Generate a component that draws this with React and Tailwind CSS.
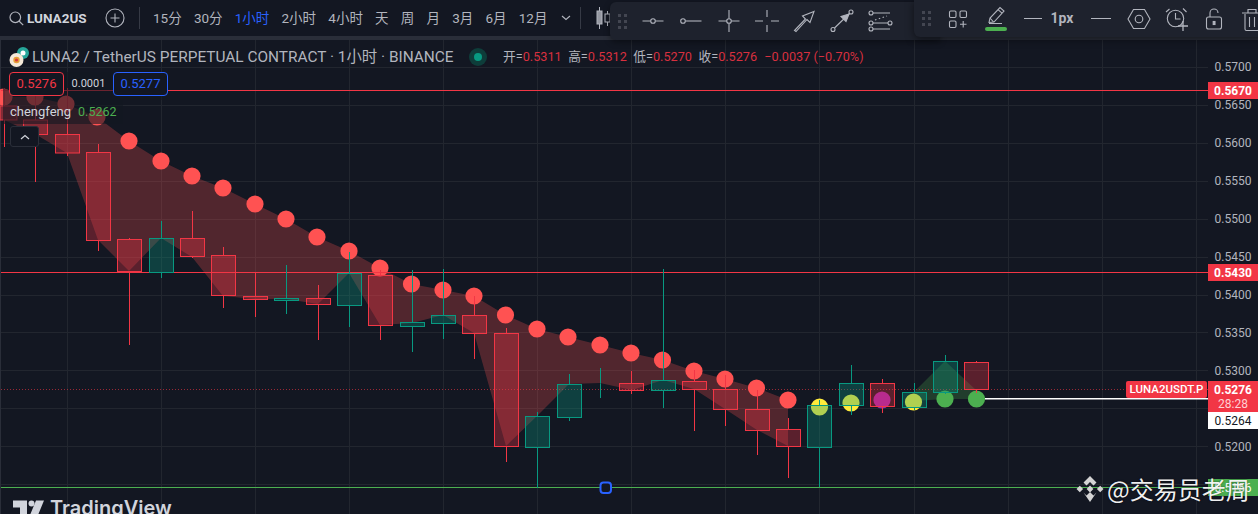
const G = "#089981";
const R = "#f23645";
const candles = [
  [4.5, 0, 17, 106, 120, 88, 147, R],
  [35.5, 23.5, 47.5, 120, 134.5, 92, 182, R],
  [67.5, 55.5, 79.5, 134.5, 153, 88, 156, R],
  [98.5, 86.5, 110.5, 152.5, 240.5, 144, 251, R],
  [129.5, 117.5, 141.5, 239.5, 271.5, 238, 345, R],
  [161.5, 149.5, 173.5, 238.5, 272.5, 221, 278, G],
  [192.5, 180.5, 204.5, 238.5, 256.5, 211, 258, R],
  [223.5, 211.5, 235.5, 255.5, 295.5, 247, 308, R],
  [255.5, 243.5, 267.5, 296.5, 299.5, 273, 317, R],
  [286.5, 274.5, 298.5, 298.5, 300.5, 265, 314, G],
  [318.5, 306.5, 330.5, 298.5, 304.5, 285, 340, R],
  [349.5, 337.5, 361.5, 273.5, 305.5, 252, 327, G],
  [380.5, 368.5, 392.5, 275.5, 325.5, 270, 340, R],
  [412.5, 400.5, 424.5, 322.5, 326.5, 270, 352, G],
  [443.5, 431.5, 455.5, 315.5, 323.5, 269, 339, G],
  [474.5, 462.5, 486.5, 315.5, 333.5, 296, 359, R],
  [506.5, 494.5, 518.5, 333.5, 446.5, 328, 462, R],
  [537.5, 525.5, 549.5, 416.5, 447.5, 412, 488, G],
  [569.5, 557.5, 581.5, 384.5, 417.5, 374, 421, G],
  [600.5, 588.5, 612.5, 383.5, 383.5, 368, 398, G],
  [631.5, 619.5, 643.5, 383.5, 390.5, 371, 394, R],
  [663.5, 651.5, 675.5, 380.5, 390.5, 269, 408, G],
  [694.5, 682.5, 706.5, 381.5, 389.5, 370, 431, R],
  [725.5, 713.5, 737.5, 389.5, 409.5, 375, 426, R],
  [757.5, 745.5, 769.5, 409.5, 430.5, 390, 455, R],
  [788.5, 776.5, 800.5, 429.5, 446.5, 418, 478, R],
  [819.5, 807.5, 831.5, 405.5, 447.5, 400, 487, G],
  [851.5, 839.5, 863.5, 383.5, 405.5, 365, 415, G],
  [882.5, 870.5, 894.5, 383.5, 406.5, 379, 413, R],
  [914.5, 902.5, 926.5, 392.5, 407.5, 383, 410, G],
  [945.5, 933.5, 957.5, 361.5, 392.5, 355, 394, G],
  [976.5, 964.5, 988.5, 362.5, 389.5, 361, 393, R],
];
const redDots = [[4,97],[35,97],[66,104],[97,117],[129,141],[161,161],[192,176],[223,188],[255,204],[286,219],[317,237],[349,251],[380,268],[411.5,284],[443,290],[474,296],[505.5,315],[537,329],[568,337],[600,345],[631,353],[662.5,360],[694,371],[725,379],[756.5,388],[788,400]];
const otherDots = [[819.5,407,"#ffeb3b"],[851,403,"#ffeb3b"],[882,400,"#9c27b0"],[913.5,402,"#ffeb3b"],[945,399,"#4caf50"],[976.5,399,"#4caf50"]];
const closes = [[788,446],[757,430],[725,409],[694,389],[663,380],[632,390],[600,383],[569,384],[537,416],[506,446],[474,333],[443,315],[412,323],[380,325],[349,273],[318,304],[286,299],[255,299],[223,296],[192,257],[161,238],[129,271],[98,240],[67,153],[35,134],[4,120],[0,120]];
const bandPts = [[0,97], ...redDots, ...closes].map((p) => p.join(",")).join(" ");
const vGrid = [67,161,255,349,443,537,631,725,819,914,1008,1102,1196];
const hGrid = [67,105,143,181,219,257,295,332,370,408,446,484];
const prices = [["0.5700",67],["0.5650",105],["0.5600",143],["0.5550",181],["0.5500",219],["0.5450",257],["0.5400",295],["0.5350",333],["0.5300",371],["0.5200",447]];
const periods = [["15分"],["30分"],["1小时",1],["2小时"],["4小时"],["天"],["周"],["月"],["3月"],["6月"],["12月"]];

function Ico({ children, w = 28, fill = "none" }) {
  return (
    <svg width={w} height="28" viewBox={`0 0 ${w} 28`} fill={fill} stroke="#b2b5be" strokeWidth="1.1" className="block shrink-0">
      {children}
    </svg>
  );
}

function Slot({ children, w = "w-[37.7px]" }) {
  return <div className={`${w} flex justify-center items-center shrink-0`}>{children}</div>;
}

function Grip() {
  return (
    <div className="grid grid-cols-2 gap-x-[3px] gap-y-[3px] w-[9px]">
      {[0,1,2,3,4,5].map((i) => <span key={i} className="w-[3px] h-[3px] bg-[#434651]" />)}
    </div>
  );
}

function Chart() {
  return (
    <svg width="1208" height="474" viewBox="0 40 1208 474" className="block">
      <g stroke="#22262f" strokeWidth="1">
        {vGrid.map((x) => <line key={x} x1={x + 0.5} x2={x + 0.5} y1="40" y2="514" />)}
        {hGrid.map((y) => <line key={y} x1="0" x2="1208" y1={y + 0.5} y2={y + 0.5} />)}
      </g>
      <line x1="0.5" x2="0.5" y1="40" y2="514" stroke="#2a2e39" />
      <polygon points={bandPts} fill="#ff5252" fillOpacity="0.267" />
      <polygon points="914,392 945,361 976,390 976,399 945,399 914,401" fill="#4caf50" fillOpacity="0.25" />
      <line x1="1" x2="1208" y1="389.5" y2="389.5" stroke="#f23645" strokeOpacity="0.6" strokeDasharray="1 2" />
      {redDots.map(([x, y]) => <circle key={x} cx={x} cy={y} r="8.6" fill="#ff5252" />)}
      {otherDots.map(([x, y, c]) => <circle key={x} cx={x} cy={y} r="8.6" fill={c} />)}
      <line x1="1" x2="1208" y1="90.5" y2="90.5" stroke={R} />
      <line x1="1" x2="1208" y1="272.5" y2="272.5" stroke={R} />
      <line x1="1" x2="1208" y1="487.5" y2="487.5" stroke="#4caf50" />
      <line x1="985" x2="1208" y1="398.7" y2="398.7" stroke="#ffffff" strokeWidth="1.4" />
      {candles.map(([x, l, r, t, b, wt, wb, c]) => (
        <g key={x} stroke={c} strokeWidth="1">
          <line x1={x} x2={x} y1={wt} y2={t} />
          <line x1={x} x2={x} y1={b} y2={wb} />
          <rect x={l} y={t} width={r - l} height={b - t} fill={c} fillOpacity="0.32" />
        </g>
      ))}
      <rect x="600.5" y="482.5" width="10.5" height="10.5" rx="3" fill="#131722" stroke="#2962ff" strokeWidth="2" />
    </svg>
  );
}

function AxisLabel({ y, h = 17, className = "", children }) {
  return (
    <div className={`absolute left-0 w-[50px] flex items-center justify-center ${className}`} style={{ top: y - 40, height: h }}>
      {children}
    </div>
  );
}

export default function App() {
  return (
    <div className="relative w-[1258px] h-[514px] overflow-hidden bg-[#131722] text-[#b2b5be] font-['Roboto','Noto_Sans_CJK_SC',sans-serif]">
      {/* top bar */}
      <header className="h-9 flex items-center bg-[#131722] text-[13.5px] pl-[9px]">
        <svg width="15" height="15" viewBox="0 0 15 15" fill="none" stroke="#b2b5be" strokeWidth="1.2" className="shrink-0">
          <circle cx="6.3" cy="6.3" r="5.3" />
          <line x1="10" y1="10" x2="14.2" y2="14.2" />
        </svg>
        <span className="ml-[3px] w-[62px] font-bold text-[13.5px] text-[#d1d4dc]">LUNA2US</span>
        <svg width="20" height="20" viewBox="0 0 20 20" fill="none" stroke="#b2b5be" strokeWidth="1.1" className="ml-[16px] shrink-0">
          <circle cx="10" cy="10" r="9" />
          <path d="M10 5.5v9M5.5 10h9" />
        </svg>
        <span className="ml-[14px] w-px h-[22px] bg-[#363a45]" />
        <div className="ml-[13px] flex items-center gap-[12.2px]">
          {periods.map(([t, on]) => (
            <span key={t} className={on ? "text-[#2962ff]" : "text-[#b2b5be]"}>{t}</span>
          ))}
        </div>
        <svg width="10" height="6" viewBox="0 0 10 6" fill="none" stroke="#b2b5be" strokeWidth="1.1" className="ml-[14px] shrink-0">
          <path d="M1 1l4 3.5L9 1" />
        </svg>
        <span className="ml-[9px] w-px h-[22px] bg-[#363a45]" />
        <svg width="16" height="22" viewBox="0 0 16 22" fill="none" stroke="#b2b5be" className="ml-[15px] shrink-0">
          <path d="M3.5 0v22M11.5 4v15" />
          <rect x="1" y="4" width="5" height="13" fill="#9598a1" />
          <rect x="9" y="7" width="5" height="8" fill="#131722" />
        </svg>
      </header>
      <div className="h-1 bg-[#2a2e39]" />

      {/* chart */}
      <main className="relative flex h-[474px]">
        <div className="w-[1208px] shrink-0">
          <Chart />
        </div>
        <aside className="relative w-[50px] shrink-0 text-[12px]">
          {prices.map(([p, y]) => (
            <AxisLabel key={p} y={y - 8.5}>{p}</AxisLabel>
          ))}
          <AxisLabel y={82} className="bg-[#f23645] text-white font-bold">0.5670</AxisLabel>
          <AxisLabel y={264} className="bg-[#f23645] text-white font-bold">0.5430</AxisLabel>
          <div className="absolute left-0 top-[341px] w-[50px] h-[31px] bg-[#f23645] flex flex-col items-center justify-center leading-[14px]">
            <span className="text-white font-bold">0.5276</span>
            <span className="text-[#ffd0d4]">28:28</span>
          </div>
          <AxisLabel y={412} className="bg-white text-[#131722]">0.5264</AxisLabel>
          <AxisLabel y={479} className="bg-[#4caf50] text-white">0.5156</AxisLabel>
        </aside>

        {/* legend */}
        <div className="absolute left-[2px] top-[6px] flex flex-col items-start text-[14px]">
          <div className="flex items-center h-[22px]">
            <svg width="22" height="22" viewBox="0 0 22 22" className="ml-[6px] shrink-0">
              <circle cx="15" cy="7" r="6" fill="#26a69a" />
              <circle cx="15" cy="7" r="2.5" fill="#ffffff" />
              <circle cx="8.5" cy="14" r="7" fill="#f5e9d8" />
              <circle cx="8.5" cy="14" r="3.2" fill="#e8a03a" />
              <circle cx="8.5" cy="14" r="1.6" fill="#d83a3a" />
            </svg>
            <span className="ml-[2px] mt-[2px] w-[422px] whitespace-nowrap text-[15.4px]">LUNA2 / TetherUS PERPETUAL CONTRACT · 1小时 · BINANCE</span>
            <span className="ml-[15px] w-[18px] h-[18px] rounded-full bg-[#0e3d3a] flex items-center justify-center">
              <span className="w-2 h-2 rounded-full bg-[#089981]" />
            </span>
            <span className="ml-[16px] whitespace-nowrap text-[12.7px] text-[#b2b5be]">
              开=<span className="text-[#d8303f]">0.5311</span>
              <span className="ml-[6.5px]">高=</span><span className="text-[#d8303f]">0.5312</span>
              <span className="ml-[6.5px]">低=</span><span className="text-[#d8303f]">0.5270</span>
              <span className="ml-[6.5px]">收=</span><span className="text-[#d8303f]">0.5276</span>
              <span className="ml-[7px] text-[#d8303f]">−0.0037 (−0.70%)</span>
            </span>
          </div>
          <div className="mt-[4px] ml-[1px] pl-[6px] pb-[4px] flex items-center text-[13px] bg-[#131722]/60">
            <span className="w-[55px] h-[24px] rounded-[4px] border border-[#f23645] bg-[#131722] text-[#f23645] flex items-center justify-center">0.5276</span>
            <span className="w-[49px] text-center text-[11px] text-[#d1d4dc]">0.0001</span>
            <span className="w-[55px] h-[24px] rounded-[4px] border border-[#2962ff] bg-[#131722] text-[#2962ff] flex items-center justify-center">0.5277</span>
          </div>
          <div className="ml-[1px] pl-[7px] pr-[6px] flex items-center h-[24px] text-[13px] bg-[#131722]/60">
            <span className="text-[#d1d4dc]">chengfeng</span>
            <span className="ml-[7px] text-[12.5px] text-[#4caf50]">0.5262</span>
          </div>
          <button className="mt-[2px] ml-[8px] w-[29px] h-[21px] rounded-[3px] border border-[#2a2e39] bg-[#131722] flex items-center justify-center">
            <svg width="10" height="6" viewBox="0 0 10 6" fill="none" stroke="#d1d4dc" strokeWidth="1.2"><path d="M1 5l4-3.5L9 5" /></svg>
          </button>
        </div>

        {/* symbol tag */}
        <div className="absolute left-[1126px] top-[341px] w-[81px] h-[17px] rounded-[2px] bg-[#f23645] text-white text-[11.5px] font-medium flex items-center justify-center">
          LUNA2USDT.P
        </div>

        {/* tradingview */}
        <div className="absolute left-[13px] top-[460px] flex items-start">
          <svg width="31" height="15" viewBox="0 0 31 15" fill="#d1d4dc" className="shrink-0">
            <path d="M0 .6h14v14.4H7V7.6H0zM23 .6h8l-6 14.4h-8z" />
            <circle cx="18.5" cy="3.6" r="3" />
          </svg>
          <span className="ml-[6px] -mt-[2px] text-[20px] font-semibold leading-none text-[#d1d4dc] font-['Inter',sans-serif]">TradingView</span>
        </div>

        {/* watermark */}
        <div className="absolute left-[1076px] top-[435px] flex items-center h-[28px]">
          <svg width="28" height="28" viewBox="0 0 28 28" fill="#d4d4d4" className="shrink-0">
            <path d="M14 1l6.5 6.5-3 3L14 7l-3.5 3.5-3-3zM3.8 10.7l3.3 3.3-3.3 3.3L.5 14zM24.2 10.7l3.3 3.3-3.3 3.3-3.3-3.3zM14 10.6l3.4 3.4-3.4 3.4-3.4-3.4zM7.5 17.5l3 3L14 17l3.5 3.5 3-3L14 27z" />
          </svg>
          <span className="ml-[3px] text-[24px] leading-none text-white/95 whitespace-nowrap font-['Noto_Sans_CJK_SC',sans-serif] [text-shadow:0_0_2px_rgba(0,0,0,0.6)]">@交易员老周</span>
        </div>
      </main>

      {/* line tools toolbar */}
      <div className="absolute left-[610px] top-[2px] w-[330px] h-[38px] rounded-l-[6px] bg-[#1e222d] flex items-center shadow-[0_2px_6px_rgba(0,0,0,0.4)]">
        <div className="w-[24.6px] flex justify-center pl-[1px]"><Grip /></div>
        <Slot><Ico><path d="M3.5 14h8M16.5 14h8" /><circle cx="14" cy="14" r="2.3" /></Ico></Slot>
        <Slot><Ico><path d="M8.5 14h16" /><circle cx="6" cy="14" r="2.3" /></Ico></Slot>
        <Slot><Ico><path d="M3.5 14h8M16.5 14h8M14 3v8.5M14 16.5V25" /><circle cx="14" cy="14" r="2.3" /></Ico></Slot>
        <Slot><Ico><path d="M2 14h8M18 14h8M14 3v7M14 18v7" /></Ico></Slot>
        <Slot><Ico><path d="M4.5 23.5L15.5 12l-3-3L24 4.5 20 15.5l-3-3L6 24.5z" /></Ico></Slot>
        <Slot><Ico><circle cx="5" cy="22.5" r="2" /><circle cx="23" cy="5" r="2" /><path d="M6.5 21L21.5 6.5" /><path d="M21 7L13 9.5l5 5z" fill="#b2b5be" /></Ico></Slot>
        <Slot><Ico><path d="M7 6h17M7 16h15M7 22h17" /><path d="M9 13l12-4" strokeDasharray="1.5 2.5" /><circle cx="5" cy="6" r="2" /><circle cx="5" cy="16" r="2" /><circle cx="24" cy="16" r="2" /><circle cx="5" cy="22" r="2" /></Ico></Slot>
      </div>

      {/* properties toolbar */}
      <div className="absolute left-[914px] top-0 w-[400px] h-[37px] rounded-bl-[6px] bg-[#1e222d] flex items-center shadow-[0_2px_8px_rgba(0,0,0,0.5)]">
        <div className="w-[25px] flex justify-center shrink-0"><Grip /></div>
        <Slot><Ico><rect x="5.5" y="6" width="6.5" height="6.5" rx="1.2" /><rect x="16" y="6" width="6.5" height="6.5" rx="1.2" /><rect x="5.5" y="16" width="6.5" height="6.5" rx="1.2" /><path d="M19.2 16v6.5M16 19.2h6.5" /></Ico></Slot>
        <Slot>
          <div className="relative w-[28px] h-[28px]">
            <Ico><path d="M7 17.5l1-4.5L18 2.5l4 3.5-10 11zM8 13l4 4.5M16 4.6l4 3.5M7 18.5h13" /></Ico>
            <span className="absolute left-[3px] top-[22px] w-[22px] h-[4px] rounded-full bg-[#4caf50]" />
          </div>
        </Slot>
        <div className="ml-[10px] w-[18px] h-px bg-[#b2b5be] shrink-0" />
        <span className="ml-[8px] w-[29px] shrink-0 text-[14px] font-bold text-[#b2b5be]">1px</span>
        <div className="ml-[12px] w-[20px] h-px bg-[#b2b5be] shrink-0" />
        <div className="ml-[8.6px] shrink-0"><Slot><Ico><path d="M8.5 4.5h11L25 14l-5.5 9.5h-11L3 14z" /><circle cx="14" cy="14" r="3.8" /></Ico></Slot></div>
        <Slot><Ico><circle cx="12.5" cy="13.5" r="8.2" /><path d="M12.5 8v6h5M3 7l3.5-3M20 3.5L23.5 7" /><path d="M20 16v10M15 21h10" strokeWidth="1.3" /></Ico></Slot>
        <Slot><Ico><rect x="6.5" y="12" width="15" height="12" rx="2" /><path d="M10 12V8a4 4 0 0 1 8 0" /><rect x="13.2" y="16.5" width="1.8" height="3" fill="#b2b5be" /></Ico></Slot>
        <Slot><Ico><path d="M7 9v15a1.5 1.5 0 0 0 1.5 1.5h11A1.5 1.5 0 0 0 21 24V9M4 8h20M10 8V4.5h8V8M11.5 12v10M16.5 12v10" /></Ico></Slot>
      </div>
    </div>
  );
}
